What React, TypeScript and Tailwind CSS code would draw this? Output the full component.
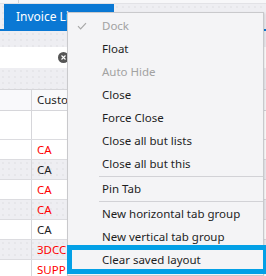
const dots =
  "bg-[#eeeef2] bg-[radial-gradient(circle,#dcdce0_0.6px,transparent_0.8px)] bg-[length:6px_6px]";

type Row = { text: string; red: boolean };

const rows: Row[] = [
  { text: "CA", red: true },
  { text: "CA", red: false },
  { text: "CA", red: true },
  { text: "CA", red: true },
  { text: "CA", red: false },
  { text: "3DCC", red: true },
  { text: "SUPP", red: true },
];

type Item = { label: string; disabled?: boolean; checked?: boolean; sep?: boolean };

const items: Item[] = [
  { label: "Dock", disabled: true, checked: true },
  { label: "Float" },
  { label: "Auto Hide", disabled: true },
  { label: "Close" },
  { label: "Force Close" },
  { label: "Close all but lists" },
  { label: "Close all but this" },
  { label: "Pin Tab", sep: true },
  { label: "New horizontal tab group", sep: true },
  { label: "New vertical tab group" },
  { label: "Clear saved layout" },
];

function Check() {
  return (
    <svg width="10" height="8" viewBox="0 0 10 8" className="absolute left-[9px] top-1/2 -translate-y-1/2">
      <path d="M1 4.2 L3.6 6.8 L9 1.2" fill="none" stroke="#a8a8a8" strokeWidth="1.2" />
    </svg>
  );
}

function ContextMenu() {
  return (
    <div className="absolute left-[67px] top-[12px] w-[197px] border border-[#c9c9cc] bg-[#f4f4f6] pt-[1px] pb-[4px] shadow-[1px_1px_2px_rgba(0,0,0,0.12)]">
      {items.map((it) => (
        <div key={it.label}>
          {it.sep && <div className="ml-[31px] my-[0.5px] h-px bg-[#d2d2d6]" />}
          <div
            className={`relative flex h-[23px] items-center pl-[34px] text-[11.5px] ${
              it.disabled ? "text-[#a2a2a2]" : "text-[#1e1e1e]"
            }`}
          >
            {it.checked && <Check />}
            {it.label}
          </div>
        </div>
      ))}
    </div>
  );
}

export default function App() {
  return (
    <div className="relative h-[276px] w-[266px] overflow-hidden bg-white font-['Segoe_UI','Noto_Sans',sans-serif] leading-none">
      {/* top strip */}
      <div className="relative h-[4px] border-b border-[#e2e2e6] bg-[#f7f7f9]">
        <div className="absolute left-[18px] top-0 h-full w-px bg-[#d4d4d8]" />
      </div>

      {/* tab strip */}
      <div className={`flex h-[27px] border-b-2 border-[#0a78d4] ${dots}`}>
        <div className="ml-[4px] flex w-[110px] items-center bg-[#0a78d4] pl-[12px] pt-[1px] text-[12px] text-white">
          Invoice List
        </div>
      </div>

      <div className={`h-[16px] ${dots}`} />

      {/* search input */}
      <div className="relative h-[21px] bg-white">
        <div className="absolute left-[58px] top-[5px] flex h-[11px] w-[11px] items-center justify-center rounded-full bg-[#555]">
          <svg width="5" height="5" viewBox="0 0 5 5">
            <path d="M0.5 0.5 L4.5 4.5 M4.5 0.5 L0.5 4.5" stroke="#fff" strokeWidth="1.1" />
          </svg>
        </div>
      </div>

      <div className={`h-[21px] ${dots}`} />

      {/* grid */}
      <div className="border-t border-[#d6d6da]">
        <div className="grid grid-cols-[32px_1fr] h-[21px] border-b border-[#d6d6da] bg-[#f9f9fb] text-[11.5px] text-[#1e1e1e]">
          <div className="border-r border-[#d6d6da]" />
          <div className="flex items-center pl-[5px]">Customer</div>
        </div>
        <div className="grid grid-cols-[32px_1fr] h-[29px] border-b border-[#dcdce0] bg-white">
          <div className="border-r border-[#d6d6da]" />
          <div />
        </div>
        {rows.map((r, i) => (
          <div
            key={i}
            className={`grid grid-cols-[32px_1fr] h-[20px] border-b border-[#dcdce0] text-[11.5px] ${
              i % 2 === 1 ? dots : "bg-white"
            }`}
          >
            <div className="border-r border-[#d6d6da]" />
            <div className={`flex items-center pl-[5px] ${r.red ? "text-[#ff0000]" : "text-[#1e1e1e]"}`}>
              {r.text}
            </div>
          </div>
        ))}
      </div>

      <ContextMenu />

      {/* highlight annotation */}
      <div className="absolute left-[67px] top-[245px] h-[29px] w-[201px] border-[5px] border-[#03a0e6]" />
    </div>
  );
}
